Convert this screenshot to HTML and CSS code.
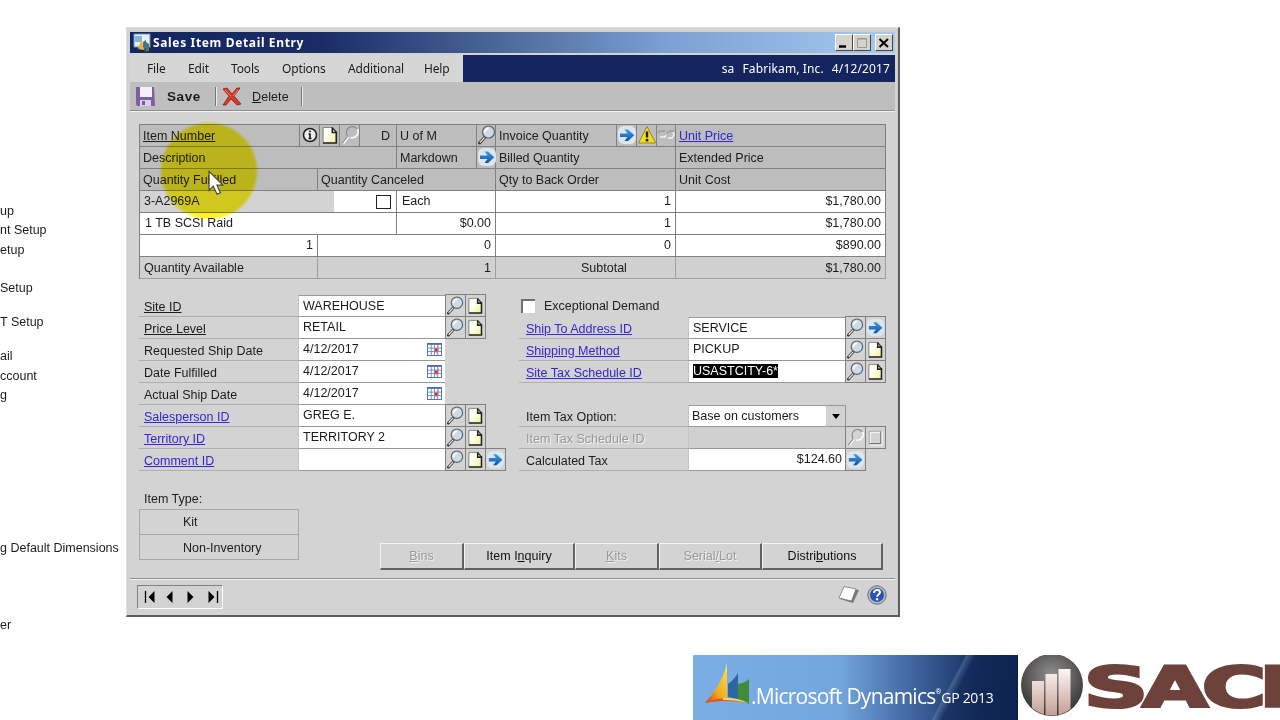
FILE: index.html
```html
<!DOCTYPE html>
<html lang="en">
<head>
  <meta charset="UTF-8">
  <meta name="viewport" content="width=device-width, initial-scale=1.0">
  <title>Sales Item Detail Entry</title>
  <link rel="stylesheet" href="styles.css">
</head>
<body>
  <!-- icon set -->
  <svg class="defs" width="0" height="0">
    <defs>
      <linearGradient id="paper" x1="0" y1="0" x2="1" y2="1">
        <stop offset=".4" stop-color="#fffff4"/><stop offset="1" stop-color="#f2f08a"/>
      </linearGradient>
      <linearGradient id="arrowfill" x1="0" y1="0" x2="0" y2="1">
        <stop offset="0" stop-color="#3aa0e8"/><stop offset="1" stop-color="#1450a8"/>
      </linearGradient>
      <symbol id="lens" viewBox="0 0 20 20">
        <path d="M8 12L2.5 18" stroke="#333" stroke-width="3" stroke-linecap="round"/>
        <path d="M7.5 12.500L2.8 17.6" stroke="#e4e4e4" stroke-width="1.4"/>
        <circle cx="11.500" cy="7" r="6" fill="#cbdbe8" stroke="#5c6166" stroke-width="1.2"/>
        <path d="M8 7.500a3.800 3.800 0 0 1 3.500-4" stroke="#fff" stroke-width="1.8" fill="none"/>
      </symbol>
      <symbol id="lens-off" viewBox="0 0 20 20">
        <path d="M8.500 12L3.500 18.500M17.500 4a6 6 0 0 1-7 8.500" stroke="#fff" stroke-width="1.6" fill="none"/>
        <path d="M7.500 11.500L2.500 18M7.500 11a5.900 5.900 0 1 1 9.500-7" stroke="#8c8c8c" stroke-width="1.2" fill="none"/>
      </symbol>
      <symbol id="doc" viewBox="0 0 20 20">
        <path d="M3.500 3h9l4 4.500V17.500h-13z" fill="url(#paper)"/>
        <path d="M3 18V2.500h9.500" fill="none" stroke="#888" stroke-width="1"/>
        <path d="M12.300 2.500v5h4v10.500H3" fill="none" stroke="#222" stroke-width="1.600"/>
        <path d="M12.300 2.700l4.200 4.800" stroke="#222" stroke-width="1.200"/>
      </symbol>
      <symbol id="doc-off" viewBox="0 0 20 20">
        <path d="M3.500 17V3.500H16" stroke="#999" fill="none"/>
        <path d="M4.500 16V4.500H15" stroke="#fff" fill="none"/>
        <path d="M15.500 4v12.500H4" stroke="#777" stroke-width="1.200" fill="none"/>
        <path d="M17 4v14H4" stroke="#fff" fill="none"/>
      </symbol>
      <symbol id="arrow" viewBox="0 0 20 20">
        <rect x="1" y="1" width="18" height="18" rx="6" fill="#dde6ec"/>
        <path d="M3 8.500h7.500L7.500 4.500h3.500L17.300 10.200 11 16H7.500l3-4H3z" fill="url(#arrowfill)"/>
      </symbol>
      <symbol id="cal" viewBox="0 0 16 14">
        <rect width="16" height="14" fill="#4a6ba8"/>
        <path d="M1 2h14v11H1z" fill="#fff"/>
        <path d="M4.500 2v11M8 2v11M11.500 2v11M1 5.500h14M1 9.200h14" stroke="#6d8cbc" stroke-width="1"/>
        <path d="M8.500 6h3v3h-3z" fill="#d83020"/>
        <path d="M12 3v2.500M12 6v3M9 10h2v2.500" stroke="#e88070" stroke-width="1" fill="none"/>
      </symbol>
    </defs>
  </svg>

  <div class="desktop">
    <ul class="outline">
      <li style="height:19px">up</li>
      <li style="height:20px">nt Setup</li>
      <li style="height:38px">etup</li>
      <li style="height:34px">Setup</li>
      <li style="height:34px">T Setup</li>
      <li style="height:20px">ail</li>
      <li style="height:19px">ccount</li>
      <li style="height:153px">g</li>
      <li style="height:77px">g Default Dimensions</li>
      <li style="height:20px">er</li>
    </ul>

    <div class="window">
      <div class="titlebar">
        <svg class="app-icon" width="18" height="19" viewBox="0 0 18 19">
          <rect x="1" y="1" width="16" height="13" fill="#e9eef2" stroke="#6c8cc0"/>
          <rect x="2" y="3" width="7" height="6" fill="#7fb5e0"/>
          <path d="M5 15l4-9 1 9z" fill="#f0b020"/>
          <path d="M10 15V9l3-2v9z" fill="#3d6fae"/>
          <path d="M13 17v-8l3 2v7l-5 1z" fill="#4c7d45"/>
          <path d="M4 16l6-2 2 3z" fill="#dfc23c"/>
        </svg>
        <span class="title">Sales Item Detail Entry</span>
        <div class="controls">
          <button><svg width="16" height="14"><path d="M3 10.500h7" stroke="#000" stroke-width="2.500"/></svg></button>
          <button class="second"><svg width="16" height="14"><path d="M3.500 2.500h9v9h-9z" fill="none" stroke="#999"/><path d="M3 3h10" stroke="#999"/></svg></button>
          <button class="close"><svg width="16" height="14"><path d="M3.500 3l8.500 8M12 3l-8.500 8" stroke="#000" stroke-width="2"/></svg></button>
        </div>
      </div>

      <div class="menubar">
        <div class="menu">
          <span class="m-file">File</span><span class="m-edit">Edit</span><span class="m-tools">Tools</span><span class="m-options">Options</span><span class="m-additional">Additional</span><span>Help</span>
        </div>
        <div class="session"><span>sa</span><span>Fabrikam, Inc.</span><span>4/12/2017</span></div>
      </div>

      <div class="toolbar">
        <svg width="19" height="19" viewBox="0 0 19 19">
          <path d="M0 0h18l1 19H1L0 17z" fill="#7c5fa2"/>
          <path d="M4 0h12v10H4z" fill="#f3f0f8"/>
          <path d="M4 13h11v6H4z" fill="#d9cfe6"/>
          <path d="M6 14h3v4H6z" fill="#7c5fa2"/>
        </svg>
        <span class="save">Save</span>
        <i class="sep"></i>
        <svg class="x-icon" width="20" height="19" viewBox="0 0 20 19">
          <path d="M1 2l4-1 5 6 5-6h3l-6 8 7 8-4 1-6-6-5 6H1l6-9z" fill="#d63a28" stroke="#8e1b12" stroke-width=".8"/>
          <path d="M3 3l6 6M11 9l5-6" stroke="#f08a70" stroke-width="1"/>
        </svg>
        <span class="delete"><u>D</u>elete</span>
        <i class="sep last"></i>
      </div>

      <div class="content">
        <div class="lines">
          <div class="row head">
            <div class="cell c-item"><u>Item Number</u></div>
            <div class="cell icon"><svg width="20" height="20" viewBox="0 0 20 20"><circle cx="10" cy="10" r="6.500" fill="#eee" stroke="#222" stroke-width="1.600"/><path d="M10 8.500v5M8.500 13.500h3M8.500 9H10M10 5.500v1.700" stroke="#111" stroke-width="1.600"/></svg></div>
            <div class="cell icon"><svg width="20" height="20"><use href="#doc"/></svg></div>
            <div class="cell icon"><svg width="20" height="20"><use href="#lens-off"/></svg></div>
            <div class="cell c-d">D</div>
            <div class="cell c-uom">U of M</div>
            <div class="cell icon"><svg width="20" height="20"><use href="#lens"/></svg></div>
            <div class="cell c-inv">Invoice Quantity</div>
            <div class="cell icon"><svg width="20" height="20"><use href="#arrow"/></svg></div>
            <div class="cell icon"><svg width="20" height="20" viewBox="0 0 20 20"><path d="M10 1.500L18.500 18h-17z" fill="#f2da28" stroke="#a08a10" stroke-linejoin="round"/><path d="M10 6.500v6" stroke="#222" stroke-width="2.400"/><circle cx="10" cy="15.200" r="1.400" fill="#222"/></svg></div>
            <div class="cell icon bare"><svg width="19" height="20" viewBox="0 0 19 20"><path d="M1 8l2-2h5M10 8l3-2h4" stroke="#999" stroke-width="1.300" fill="none"/><path d="M3 12h5l1-2M11 13h4l2-3-1-3" stroke="#f2f2f2" stroke-width="1.500" fill="none"/></svg></div>
            <div class="cell c-price"><a>Unit Price</a></div>
          </div>
          <div class="row head">
            <div class="cell c-desc">Description</div>
            <div class="cell c-uom">Markdown</div>
            <div class="cell icon"><svg width="20" height="20"><use href="#arrow"/></svg></div>
            <div class="cell c-qty">Billed Quantity</div>
            <div class="cell c-price">Extended Price</div>
          </div>
          <div class="row head">
            <div class="cell c-ful">Quantity Fulfilled</div>
            <div class="cell c-can">Quantity Canceled</div>
            <div class="cell c-qty">Qty to Back Order</div>
            <div class="cell c-price">Unit Cost</div>
          </div>
          <div class="row">
            <div class="cell c-locked">3-A2969A</div>
            <div class="cell c-drop"><span class="tick"></span></div>
            <div class="cell c-each">Each</div>
            <div class="cell c-qty num">1</div>
            <div class="cell c-price num">$1,780.00</div>
          </div>
          <div class="row">
            <div class="cell c-desc">1 TB SCSI Raid</div>
            <div class="cell c-each num">$0.00</div>
            <div class="cell c-qty num">1</div>
            <div class="cell c-price num">$1,780.00</div>
          </div>
          <div class="row">
            <div class="cell c-ful num">1</div>
            <div class="cell c-can num">0</div>
            <div class="cell c-qty num">0</div>
            <div class="cell c-price num">$890.00</div>
          </div>
          <div class="row total">
            <div class="cell c-ful">Quantity Available</div>
            <div class="cell c-can num">1</div>
            <div class="cell c-qty sub">Subtotal</div>
            <div class="cell c-price num">$1,780.00</div>
          </div>
        </div>

        <div class="forms">
          <div class="form left">
            <div class="field"><label><u>Site ID</u></label><div class="input">WAREHOUSE</div><svg class="btn top"><use href="#lens"/></svg><svg class="btn top"><use href="#doc"/></svg></div>
            <div class="field"><label><u>Price Level</u></label><div class="input">RETAIL</div><svg class="btn"><use href="#lens"/></svg><svg class="btn"><use href="#doc"/></svg></div>
            <div class="field"><label>Requested Ship Date</label><div class="input">4/12/2017<svg class="cal"><use href="#cal"/></svg></div></div>
            <div class="field"><label>Date Fulfilled</label><div class="input">4/12/2017<svg class="cal"><use href="#cal"/></svg></div></div>
            <div class="field"><label>Actual Ship Date</label><div class="input">4/12/2017<svg class="cal"><use href="#cal"/></svg></div></div>
            <div class="field"><label><a>Salesperson ID</a></label><div class="input">GREG E.</div><svg class="btn top"><use href="#lens"/></svg><svg class="btn top"><use href="#doc"/></svg></div>
            <div class="field"><label><a>Territory ID</a></label><div class="input">TERRITORY 2</div><svg class="btn"><use href="#lens"/></svg><svg class="btn"><use href="#doc"/></svg></div>
            <div class="field"><label><a>Comment ID</a></label><div class="input"></div><svg class="btn"><use href="#lens"/></svg><svg class="btn"><use href="#doc"/></svg><svg class="btn top"><use href="#arrow"/></svg></div>
          </div>

          <div class="form right">
            <div class="check"><span class="box"></span>Exceptional Demand</div>
            <div class="field first"><label><a>Ship To Address ID</a></label><div class="input">SERVICE</div><svg class="btn top"><use href="#lens"/></svg><svg class="btn top"><use href="#arrow"/></svg></div>
            <div class="field"><label><a>Shipping Method</a></label><div class="input">PICKUP</div><svg class="btn"><use href="#lens"/></svg><svg class="btn"><use href="#doc"/></svg></div>
            <div class="field"><label><a>Site Tax Schedule ID</a></label><div class="input"><mark>USASTCITY-6*</mark></div><svg class="btn"><use href="#lens"/></svg><svg class="btn"><use href="#doc"/></svg></div>
            <div class="gap"></div>
            <div class="field first"><label>Item Tax Option:</label><div class="input select">Base on customers<span class="drop"><svg width="8" height="5"><path d="M0 0h8L4 5z"/></svg></span></div></div>
            <div class="field off"><label>Item Tax Schedule ID</label><div class="input"></div><svg class="btn top"><use href="#lens-off"/></svg><svg class="btn top"><use href="#doc-off"/></svg></div>
            <div class="field"><label>Calculated Tax</label><div class="input num">$124.60</div><svg class="btn"><use href="#arrow"/></svg></div>
          </div>
        </div>

        <div class="bottom">
          <div class="item-type">
            <div class="caption">Item Type:</div>
            <div class="types">
              <div>Kit</div>
              <div>Non-Inventory</div>
            </div>
          </div>
          <div class="actions">
            <button class="b-bins" disabled><u>B</u>ins</button>
            <button class="b-inquiry">Item I<u>n</u>quiry</button>
            <button class="b-kits" disabled><u>K</u>its</button>
            <button class="b-serial" disabled>Serial<u>/</u>Lot</button>
            <button class="b-dist">Distri<u>b</u>utions</button>
          </div>
        </div>
      </div>

      <div class="statusbar">
        <div class="nav">
          <svg width="84" height="22" viewBox="0 0 84 22">
            <path d="M7.500 5v12M79.500 5v12" stroke="#000" stroke-width="1.300"/>
            <path d="M16.500 5v12l-6-6zM34.500 5v12l-6-6zM49.500 5v12l6-6zM70.500 5v12l6-6z"/>
          </svg>
        </div>
        <div class="help">
          <svg width="22" height="20" viewBox="0 0 22 20">
            <path d="M6 2l15 3-6 13-13-4z" fill="#777"/>
            <path d="M6 1.500L18 4 13.500 16 1 13z" fill="#fff" stroke="#777" stroke-width=".8"/>
          </svg>
          <svg width="20" height="20" viewBox="0 0 20 20">
            <circle cx="10" cy="10" r="9.200" fill="#b4bac4" stroke="#6b717c"/>
            <circle cx="10" cy="10" r="7" fill="#2b54ae"/>
            <path d="M7 8c0-4 6-4 6-.8 0 2-2.800 2-2.800 4.500" fill="none" stroke="#fff" stroke-width="2"/>
            <circle cx="10.100" cy="14.200" r="1.200" fill="#fff"/>
          </svg>
        </div>
      </div>

      <div class="highlight"></div>
      <svg class="cursor" width="17" height="26" viewBox="0 0 16 24">
        <path d="M1 1v18l4-4 3.500 7.500 3.200-1.400L8.400 14H14z" fill="#fff" stroke="#444" stroke-width="1.100"/>
      </svg>
    </div>
  </div>

  <div class="brands">
    <div class="dynamics">
      <svg width="46" height="46" viewBox="0 0 46 46">
        <defs>
          <linearGradient id="sail" x1="1" y1="0" x2="0" y2="1">
            <stop offset="0" stop-color="#f8e84c"/><stop offset=".6" stop-color="#f2a51c"/><stop offset="1" stop-color="#d63a1c"/>
          </linearGradient>
        </defs>
        <path d="M22 1v37C14 37 7 39 0 41 9 31 18 18 22 1z" fill="url(#sail)"/>
        <path d="M23 22c4-3 7-6 10-11v26l-10-2z" fill="#2d679f"/>
        <path d="M33 22c5-1 8-2 11-5v25l-11-5z" fill="#3f8c3c"/>
        <path d="M1 41c10-6 24-6 43 0-13-2-28-3-43 0z" fill="#e85020"/>
        <path d="M18 36c9 0 17 1 26 5-10-2-16-3-26-3z" fill="#f4dc4a"/>
      </svg>
      <span class="ms">.Microsoft Dynamics</span><span class="reg">®</span><span class="gp">GP 2013</span>
    </div>
    <svg class="sac" width="260" height="65" viewBox="0 0 260 65">
      <defs>
        <radialGradient id="ball" cx=".5" cy=".35" r=".6">
          <stop offset="0" stop-color="#929292"/><stop offset="1" stop-color="#3c3938"/>
        </radialGradient>
        <linearGradient id="bar" x1="0" y1="0" x2="0" y2="1">
          <stop offset="0" stop-color="#fbf6f3"/><stop offset="1" stop-color="#c29c92"/>
        </linearGradient>
        <clipPath id="disc"><circle cx="32" cy="30" r="30.500"/></clipPath>
      </defs>
      <circle cx="32" cy="30" r="31" fill="url(#ball)"/>
      <g clip-path="url(#disc)" fill="url(#bar)">
        <path d="M12 26h12v36H12zM25.500 19H37v43H25.500zM38.500 14h12v48h-12z"/>
      </g>
      <g class="sac-name">
        <text x="64" y="51" textLength="64" lengthAdjust="spacingAndGlyphs">S</text>
        <text x="122.500" y="51" textLength="65" lengthAdjust="spacingAndGlyphs">A</text>
        <text x="182" y="51" textLength="64" lengthAdjust="spacingAndGlyphs">C</text>
        <text x="240" y="51" textLength="28" lengthAdjust="spacingAndGlyphs">I</text>
      </g>
    </svg>
  </div>
</body>
</html>
```
FILE: styles.css
```css
* {
  box-sizing: border-box;
}

body {
  margin: 0;
  width: 1280px;
  height: 720px;
  overflow: hidden;
  background: #fff;
  color: #1c1c1c;
  font-family: "Liberation Sans", Arial, sans-serif;
  font-size: 12.5px;
}

svg {
  display: block;
  flex: none;
}

.defs {
  position: absolute;
}

.desktop {
  display: flex;
  height: 655px;
}

/* outline behind the window */
.outline {
  list-style: none;
  margin: 0;
  padding: 203px 0 0;
  width: 126px;
  line-height: 16px;
  white-space: nowrap;
}

/* window frame */
.window {
  position: relative;
  display: flex;
  flex-direction: column;
  width: 774px;
  height: 590px;
  margin-top: 27px;
  padding: 4px 3px 0 3px;
  background: #d3d3d3;
  border: 1px solid #dedede;
  border-right: 2px solid #5c5c5c;
  border-bottom: 2px solid #5c5c5c;
}

.titlebar {
  display: flex;
  align-items: center;
  height: 21px;
  padding-left: 3px;
  background: linear-gradient(90deg, #12265f 0%, #1a2c66 25%, #4b6799 48%, #7ba0d2 70%, #a6caf0 100%);
}

.title {
  margin-left: 2px;
  color: #fff;
  font-family: "Noto Sans", sans-serif;
  font-size: 12px;
  font-weight: 700;
  letter-spacing: 0.65px;
}

.controls {
  display: flex;
  margin-left: auto;
  padding-right: 2px;
}

.controls button {
  width: 18px;
  height: 17px;
  padding: 0;
  background: #d6d3ce;
  border: 1px solid #fff;
  border-right-color: #444;
  border-bottom-color: #444;
}

.controls .close {
  margin-left: 4px;
}

.menubar {
  display: flex;
  justify-content: space-between;
  height: 27px;
  margin-top: 2px;
  background: #13245f;
  font-family: "Noto Sans", sans-serif;
  font-size: 12px;
  line-height: 27px;
}

.menu {
  display: flex;
  width: 333px;
  padding-left: 17px;
  background: #d6d6d6;
  letter-spacing: -0.15px;
}

.m-file { width: 41px; }
.m-edit { width: 43px; }
.m-tools { width: 51px; }
.m-options { width: 66px; }
.m-additional { width: 76px; }

.session {
  display: flex;
  gap: 8px;
  padding-right: 5px;
  color: #fff;
  letter-spacing: 0.13px;
}

.toolbar {
  display: flex;
  align-items: center;
  height: 29px;
  padding-left: 6px;
  background: #bebebe;
  border-bottom: 1px solid #8f8f8f;
  box-shadow: 0 1px 0 #f2f2f2;
}

.save {
  width: 48px;
  margin-left: 12px;
  font-size: 13.5px;
  font-weight: 700;
  letter-spacing: 0.6px;
}

.sep {
  width: 2px;
  height: 19px;
  background: #777;
  border-right: 1px solid #eee;
}

.x-icon {
  margin-left: 5px;
}

.delete {
  width: 49px;
  margin-left: 10px;
  padding-top: 1px;
  letter-spacing: 0.1px;
}

/* item grid */
.content {
  flex: 1;
  padding: 13px 9px 0;
}

.lines {
  width: 747px;
  border: 1px solid #808080;
  border-bottom: 0;
  border-right: 0;
}

.row {
  display: flex;
  height: 22px;
  background: #fff;
}

.cell {
  height: 22px;
  padding: 0 4px 0 3px;
  line-height: 22px;
  white-space: nowrap;
  border-right: 1px solid #808080;
  border-bottom: 1px solid #808080;
}

.head,
.head .cell {
  background: #bdbdbd;
}

.cell.icon {
  width: 20px;
  padding: 0;
}

.cell.bare {
  width: 19px;
}

.num {
  text-align: right;
}

.c-item { width: 160px; }
.c-d { width: 37px; text-align: right; }
.c-item + .icon ~ .c-d { padding-right: 6px; }
.c-desc { width: 257px; }
.c-uom { width: 80px; }
.c-each { width: 99px; }
.c-inv { width: 121px; }
.c-qty { width: 180px; }
.c-price { width: 210px; }
.c-ful { width: 178px; }
.c-can { width: 178px; }
.c-drop { width: 63px; }
.c-uom + .icon { width: 19px; }

.row:not(.head) .c-each,
.row:not(.head) .c-desc {
  padding-left: 5px;
}

.row:not(.head) .cell {
  line-height: 21px;
}

.c-locked {
  width: 194px;
  padding-left: 4px;
  background: #d3d3d3;
  border-right: 0;
}

.tick {
  display: block;
  width: 15px;
  height: 14px;
  margin: 4px 1px 0 auto;
  border: 1.5px solid #222;
}

.total {
  background: #d0d0d0;
}

.row.total .cell {
  line-height: 23px;
  border-color: #a0a0a0;
}

.total .c-ful {
  padding-left: 4px;
}

.total .sub {
  padding-left: 85px;
}

/* forms */
.forms {
  display: flex;
  margin-top: 16px;
  height: 177px;
}

.left {
  width: 383px;
  --label: 159px;
  --input: 147px;
}

.left .field:nth-child(1) .input {
  border-top: 1px solid #999;
}

.right {
  --label: 169px;
  --input: 157px;
}

.field {
  display: flex;
  height: 22px;
  line-height: 22px;
  white-space: nowrap;
}

.field label {
  width: var(--label);
  padding: 2px 0 0 5px;
  line-height: 21px;
  border-bottom: 1px solid #b0b0b0;
}

.right .field label {
  padding-left: 7px;
}

.input {
  display: flex;
  align-items: center;
  width: var(--input);
  padding: 0 0 1px 4px;
  background: #fff;
  border-left: 1px solid #c4c4c4;
  border-bottom: 1px solid #999;
}

.input.num {
  justify-content: flex-end;
  padding-right: 3px;
}

.btn {
  width: 20px;
  height: 22px;
  border: 1px solid #808080;
  border-left: 0;
  border-top: 0;
}

.input + .btn {
  width: 21px;
  border-left: 1px solid #808080;
}

.btn.top {
  box-shadow: 0 -1px 0 #808080;
}

.cal {
  width: 15px;
  height: 13px;
  margin: 1px 3px 0 auto;
}

.check {
  display: flex;
  align-items: center;
  height: 22px;
  padding-left: 2px;
}

.box {
  width: 14px;
  height: 14px;
  margin-right: 9px;
  background: #fff;
  border-top: 2px solid #707070;
  border-left: 2px solid #707070;
}

mark {
  padding: 0;
  background: #000;
  color: #fff;
  line-height: 14px;
}

.gap {
  height: 22px;
}

.select {
  width: 158px;
  padding-left: 3px;
  border-right: 1px solid #999;
}

.first .input {
  border-top: 1px solid #999;
}

.drop {
  display: grid;
  place-items: center;
  width: 19px;
  height: 20px;
  margin: 0 0 -1px auto;
  background: #d3d3d3;
}

.off {
  color: #999;
  text-shadow: 1px 1px 0 #f2f2f2;
}

.off .input {
  background: #d0d0d0;
}

a {
  color: #3426d0;
  text-decoration: underline;
}

/* item type and buttons */
.bottom {
  display: flex;
  margin-top: 20px;
}

.item-type {
  width: 241px;
}

.caption {
  height: 17px;
  padding-left: 5px;
  line-height: 14px;
}

.types {
  width: 160px;
  border: 1px solid #a8a8a8;
}

.types div {
  height: 24px;
  padding-left: 43px;
  line-height: 25px;
}

.types div + div {
  height: 25px;
  border-top: 1px solid #a8a8a8;
  line-height: 27px;
}

.actions {
  display: flex;
  margin-top: 51px;
}

.actions button {
  height: 27px;
  padding: 0;
  background: #d3d3d3;
  border: 1px solid #f4f4f4;
  border-right: 2px solid #606060;
  border-bottom: 2px solid #606060;
  color: #111;
  font-family: inherit;
  font-size: 12.5px;
}

.actions button:disabled {
  color: #999;
  text-shadow: 1px 1px 0 #f2f2f2;
}

.b-bins { width: 84px; }
.b-inquiry { width: 111px; }
.b-kits { width: 84px; }
.b-serial { width: 103px; }
.b-dist { width: 121px; }

/* record navigation */
.statusbar {
  display: flex;
  justify-content: space-between;
  align-items: flex-start;
  height: 37px;
  padding: 6px 8px 0 7px;
  border-top: 1px solid #8f8f8f;
  box-shadow: inset 0 1px 0 #f2f2f2;
}

.nav {
  border: 1px solid #808080;
  border-right-color: #fff;
  border-bottom-color: #fff;
}

.help {
  display: flex;
  gap: 7px;
}

/* pointer and click highlight */
.highlight {
  position: absolute;
  left: 32px;
  top: 93px;
  width: 100px;
  height: 100px;
  border-radius: 50%;
  background: radial-gradient(closest-side, #fcf224 92%, rgba(250, 240, 36, 0) 100%);
  mix-blend-mode: multiply;
}

.cursor {
  position: absolute;
  left: 81px;
  top: 142px;
}

/* logos */
.brands {
  display: flex;
  height: 65px;
  padding-left: 693px;
}

.dynamics {
  display: flex;
  flex: none;
  align-items: flex-start;
  width: 325px;
  padding: 7px 0 0 12px;
  border-right: 1px solid #0a1c40;
  color: #fff;
  font-family: "Open Sans", "Noto Sans", sans-serif;
  white-space: nowrap;
  background:
    linear-gradient(118deg, transparent 76%, rgba(120, 150, 200, 0.35) 76.5%, rgba(16, 38, 84, 0.6) 79%, rgba(12, 32, 76, 0.6) 100%),
    linear-gradient(90deg, #7aaee4 0%, #74a6de 45%, #3f659f 68%, #15305f 88%, #0e2450 100%);
}

.ms {
  margin-top: 19px;
  font-size: 21px;
  line-height: 30px;
  letter-spacing: -0.75px;
}

.reg {
  margin-top: 25px;
  font-size: 7px;
  line-height: 10px;
}

.gp {
  margin-top: 22px;
  font-size: 14px;
  line-height: 28px;
  letter-spacing: -0.3px;
}

.sac {
  margin-left: 2px;
}

.sac-name {
  fill: #6c423a;
  stroke: #6c423a;
  stroke-width: 3px;
  font-family: "DejaVu Sans", sans-serif;
  font-size: 56px;
  font-weight: 700;
}
```
